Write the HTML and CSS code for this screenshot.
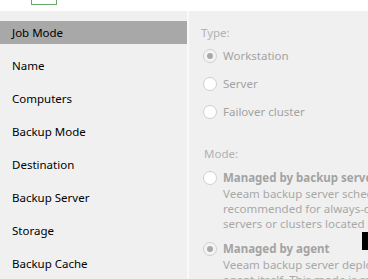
FILE: index.html
```html
<!DOCTYPE html>
<html lang="en">

<head>
  <meta charset="UTF-8">
  <title>New Agent Backup Job</title>
  <link rel="stylesheet" href="styles.css">
</head>

<body>
  <div class="wizard-header">
    <div class="header-mark"></div>
  </div>

  <div class="wizard-body">
    <ul class="step-list">
      <li class="step step-active">Job Mode</li>
      <li class="step">Name</li>
      <li class="step">Computers</li>
      <li class="step">Backup Mode</li>
      <li class="step">Destination</li>
      <li class="step">Backup Server</li>
      <li class="step">Storage</li>
      <li class="step">Backup Cache</li>
    </ul>

    <div class="step-page">
      <div class="group-label type-label">Type:</div>
      <label class="radio-row">
        <span class="radio radio-checked"></span>
        <span class="radio-text">Workstation</span>
      </label>
      <label class="radio-row">
        <span class="radio"></span>
        <span class="radio-text">Server</span>
      </label>
      <label class="radio-row">
        <span class="radio"></span>
        <span class="radio-text">Failover cluster</span>
      </label>

      <div class="group-label mode-label">Mode:</div>
      <div class="mode-option">
        <label class="radio-row radio-bold">
          <span class="radio"></span>
          <span class="radio-text">Managed by backup server</span>
        </label>
        <div class="mode-desc">
          <div>Veeam backup server schedules and executes backup jobs. This mode is</div>
          <div>recommended for always-on workstations, and for</div>
          <div>servers or clusters located in the same network as the backup server.</div>
        </div>
      </div>
      <div class="mode-option">
        <label class="radio-row radio-bold">
          <span class="radio radio-checked"></span>
          <span class="radio-text">Managed by agent</span>
        </label>
        <div class="mode-desc">
          <div>Veeam backup server deploys backup policy and the job is run by the</div>
          <div>agent itself. This mode is recommended for laptops and remote sites.</div>
        </div>
      </div>
    </div>
  </div>

  <div class="cursor-block"></div>
</body>

</html>
```

FILE: styles.css
```css
* {
  margin: 0;
  padding: 0;
  box-sizing: border-box;
}

body {
  font-family: 'Noto Sans', sans-serif;
  font-size: 11.5px;
  background: #f0f0f0;
  color: #000;
  width: 368px;
  height: 279px;
  overflow: hidden;
  position: relative;
}

.wizard-header {
  height: 11px;
  background: #ffffff;
  padding-left: 31px;
}

.header-mark {
  width: 26px;
  height: 5px;
  border: 1px solid #6aa86a;
  border-top: none;
}

.wizard-body {
  display: flex;
  height: 268px;
}

.step-list {
  list-style: none;
  width: 189px;
  flex-shrink: 0;
  background: #f0f0f0;
  border-right: 2px solid #f9f9f9;
  padding-top: 10px;
}

.step {
  height: 23px;
  line-height: 23px;
  padding-left: 12px;
  margin-bottom: 10px;
}

.step-active {
  background: #a8a8a8;
}

.step-page {
  flex: 1;
  overflow: hidden;
  white-space: nowrap;
  padding: 14px 0 0 12px;
  color: #a3a3a3;
}

.group-label {
  line-height: 15px;
}

.type-label {
  color: #b2b2b2;
  margin-bottom: 8px;
}

.mode-label {
  margin: 27px 0 9px 3px;
  color: #b2b2b2;
}

.radio-row {
  display: flex;
  align-items: center;
  height: 15px;
  margin-bottom: 13px;
  padding-left: 2px;
}

.radio {
  width: 14px;
  height: 14px;
  border-radius: 50%;
  border: 1px solid #cfcfcf;
  background: #ffffff;
  margin-right: 6px;
  display: flex;
  justify-content: center;
  align-items: center;
  flex-shrink: 0;
}

.radio-checked {
  background: #f4f4f4;
}

.radio-checked::after {
  content: '';
  width: 6px;
  height: 6px;
  border-radius: 50%;
  background: #a9a9a9;
}

.radio-bold {
  font-weight: 700;
  margin-bottom: 1px;
}

.mode-desc {
  padding-left: 22px;
  line-height: 15px;
  color: #a8a8a8;
  margin-bottom: 10px;
}

.cursor-block {
  position: absolute;
  left: 362px;
  top: 232px;
  width: 6px;
  height: 18px;
  background: #000;
}
```
